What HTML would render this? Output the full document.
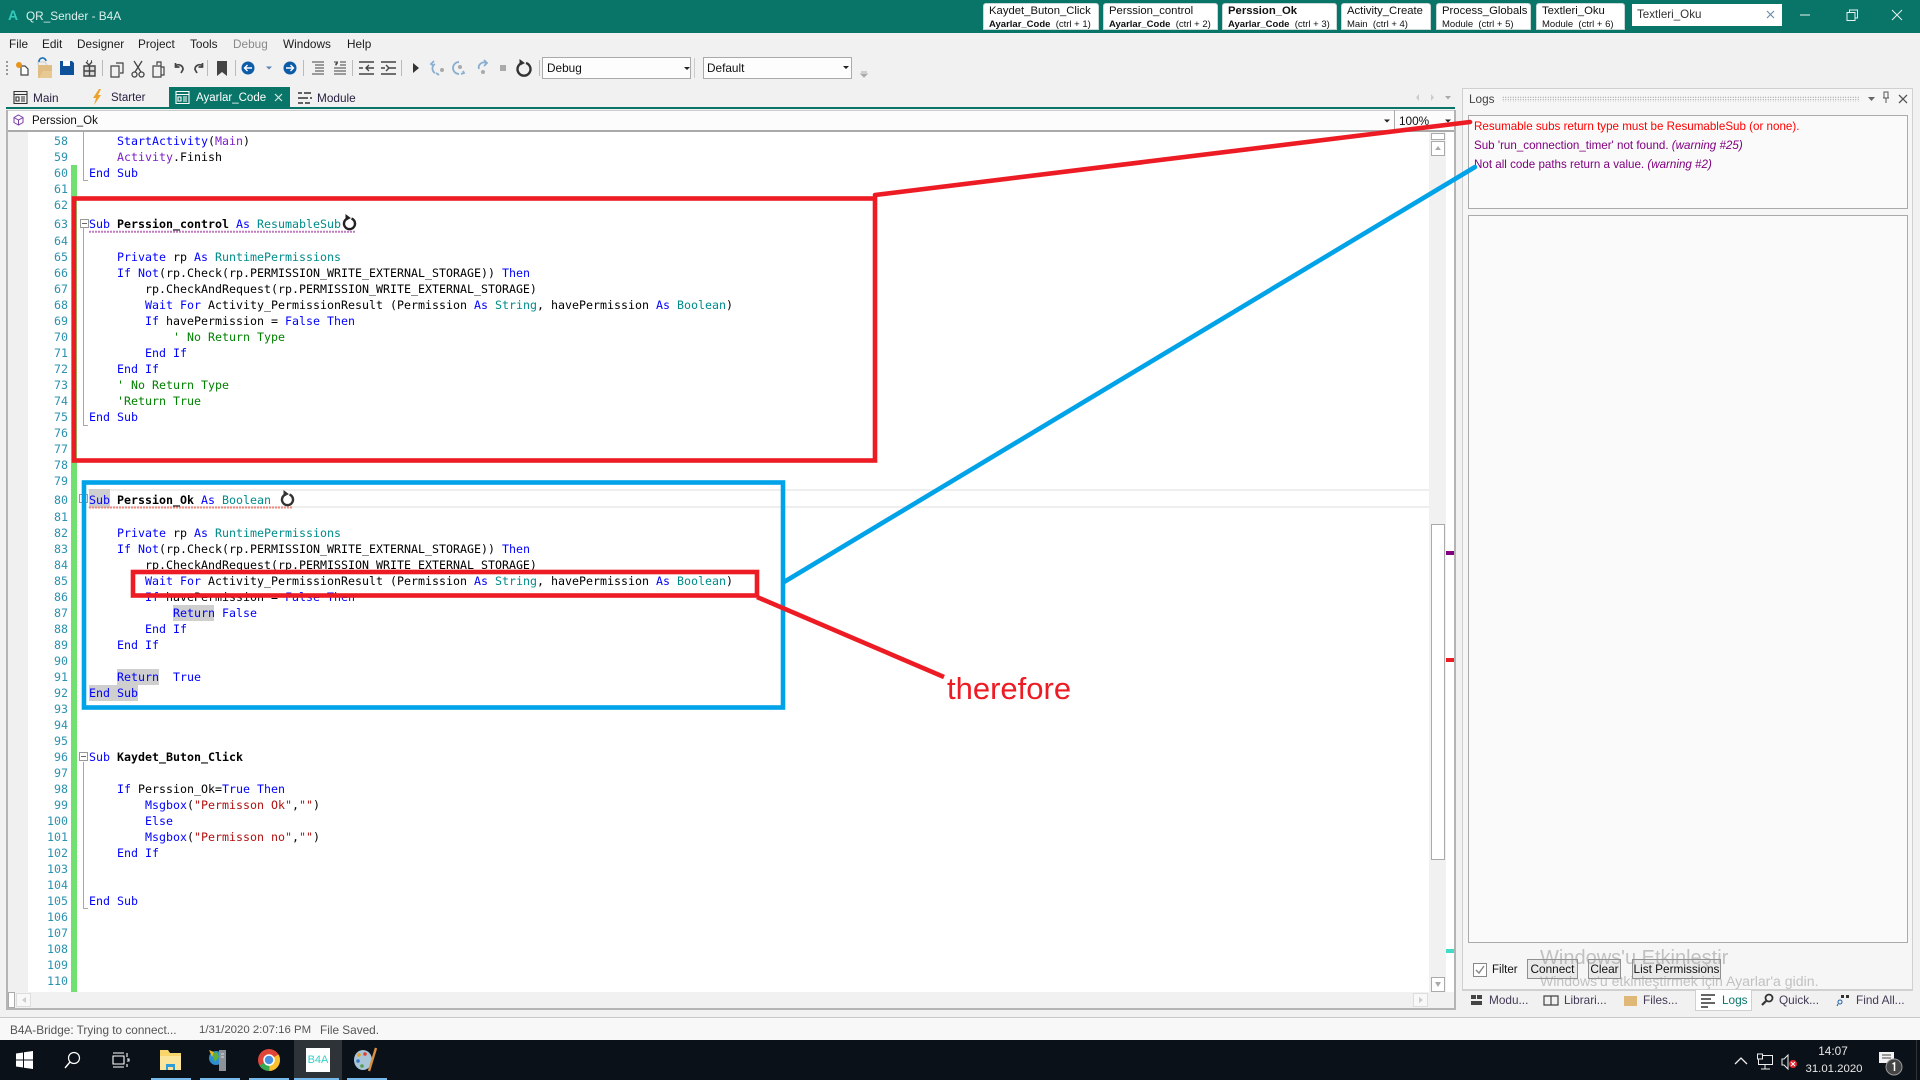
<!DOCTYPE html>
<html><head><meta charset="utf-8"><title>QR_Sender - B4A</title>
<style>
html,body{margin:0;padding:0;width:1920px;height:1080px;overflow:hidden;background:#f1f1f1;font-family:"Liberation Sans",sans-serif;font-size:11.8px;color:#222}
div,span.a{position:absolute;white-space:pre}
.b{background:#fff}
.m{top:36px;height:16px;line-height:16px;color:#1c1c1c}
.n,.c{font-family:"DejaVu Sans Mono","Liberation Mono",monospace;font-size:11.63px;height:16px;line-height:16px}
.n{left:28px;width:40px;text-align:right;color:#2b91af}
.c{color:#000}
.k{color:#0000ff}.t{color:#008b8b}.g{color:#008000}.p{color:#7d1fc8}.s{color:#b01010}.bd{font-weight:bold}
.tab{top:3px;height:27px;background:#fff;border:1px solid #c8d8d5;border-radius:3px 3px 0 0;box-sizing:border-box;overflow:hidden}
.tab .l1{left:5px;top:0;font-size:11.3px;line-height:14px;color:#111}
.tab .l2{left:5px;top:15px;font-size:9.5px;line-height:11px;color:#111}
.hl{background:#cfcfcf}
.btn{top:959px;height:20px;line-height:19px;box-sizing:border-box;border:1px solid #8f8f8f;background:rgba(225,225,225,.6);text-align:center;color:#111}
.bt{top:992px;height:16px;line-height:16px;color:#443a55}
.fl{background:#a8a8a8}
</style></head><body>

<!-- title bar -->
<div style="left:0;top:0;width:1920px;height:33px;background:#087568"></div>
<div style="left:8px;top:7px;font-size:14px;font-weight:bold;line-height:16px;color:#35cbbb">A</div>
<div style="left:26px;top:8px;line-height:16px;color:#dcefec">QR_Sender - B4A</div>

<div class="tab" style="left:983px;width:116px"><div class="l1">Kaydet_Buton_Click</div><div class="l2"><b>Ayarlar_Code</b>  (ctrl + 1)</div></div>
<div class="tab" style="left:1103px;width:115px"><div class="l1">Perssion_control</div><div class="l2"><b>Ayarlar_Code</b>  (ctrl + 2)</div></div>
<div class="tab" style="left:1222px;width:115px"><div class="l1"><b>Perssion_Ok</b></div><div class="l2"><b>Ayarlar_Code</b>  (ctrl + 3)</div></div>
<div class="tab" style="left:1341px;width:90px"><div class="l1">Activity_Create</div><div class="l2">Main  (ctrl + 4)</div></div>
<div class="tab" style="left:1436px;width:95px"><div class="l1">Process_Globals</div><div class="l2">Module  (ctrl + 5)</div></div>
<div class="tab" style="left:1536px;width:89px"><div class="l1">Textleri_Oku</div><div class="l2">Module  (ctrl + 6)</div></div>
<div style="left:1632px;top:4px;width:150px;height:22px;background:#fff"></div>
<div style="left:1637px;top:7px;font-size:11.6px;line-height:16px;color:#333">Textleri_Oku</div>

<!-- menu -->
<div class="m" style="left:9px">File</div>
<div class="m" style="left:42px">Edit</div>
<div class="m" style="left:77px">Designer</div>
<div class="m" style="left:138px">Project</div>
<div class="m" style="left:190px">Tools</div>
<div class="m" style="left:233px;color:#888">Debug</div>
<div class="m" style="left:283px">Windows</div>
<div class="m" style="left:347px">Help</div>

<!-- combos -->
<div style="left:542px;top:57px;width:149px;height:22px;box-sizing:border-box;border:1px solid #aaa;background:#fdfdfd;line-height:21px;padding-left:4px;color:#111">Debug</div>
<div style="left:703px;top:57px;width:149px;height:22px;box-sizing:border-box;border:1px solid #aaa;background:#fdfdfd;line-height:21px;padding-left:3px;color:#111">Default</div>

<!-- doc tabs -->
<div style="left:169px;top:87px;width:121px;height:20px;background:#087568"></div>
<div style="left:6px;top:107px;width:1449px;height:2px;background:#087568"></div>
<div style="left:33px;top:90px;line-height:16px;color:#2a2140">Main</div>
<div style="left:111px;top:90px;font-size:11.5px;line-height:16px;color:#2a2140">Starter</div>
<div style="left:196px;top:90px;font-size:11.5px;line-height:16px;color:#fff">Ayarlar_Code</div>
<div style="left:317px;top:90px;line-height:16px;color:#2a2140">Module</div>

<!-- editor frame -->
<div style="left:7px;top:110px;width:1448px;height:22px;background:#fcfcfc;border-top:1px solid #ccc;border-left:1px solid #ccc;box-sizing:border-box;border-bottom:2px solid #aaa"></div>
<div style="left:1394px;top:110px;width:1px;height:22px;background:#aaa"></div>
<div style="left:32px;top:113px;font-size:11.5px;line-height:16px;color:#111">Perssion_Ok</div>
<div style="left:1399px;top:113px;line-height:16px;color:#111">100%</div>
<div style="left:7px;top:132px;width:1447px;height:876px;background:#fff"></div>
<div style="left:7px;top:132px;width:21px;height:876px;background:#f0f0f0"></div>
<div style="left:6px;top:110px;width:2px;height:900px;background:#b4b4b4"></div>
<div style="left:1454px;top:110px;width:2px;height:900px;background:#b4b4b4"></div>
<div style="left:6px;top:1008px;width:1450px;height:2px;background:#b4b4b4"></div>
<div style="left:8px;top:992px;width:1446px;height:16px;background:#f1f1f1"></div>
<div style="left:1429px;top:132px;width:17px;height:860px;background:#f1f1f1"></div>
<div style="left:1431px;top:524px;width:14px;height:336px;background:#fff;border:1px solid #aaa;box-sizing:border-box"></div>
<div style="left:1431px;top:133px;width:14px;height:7px;background:#fff;border:1px solid #aaa;box-sizing:border-box"></div>
<div style="left:1431px;top:141px;width:14px;height:15px;background:#fff;border:1px solid #aaa;box-sizing:border-box"></div>
<div style="left:1431px;top:977px;width:14px;height:15px;background:#fff;border:1px solid #aaa;box-sizing:border-box"></div>
<div style="left:8px;top:992px;width:7px;height:16px;background:#fff;border:1px solid #aaa;box-sizing:border-box"></div>
<div style="left:16px;top:993px;width:15px;height:14px;background:#f8f8f8;border:1px solid #ddd;box-sizing:border-box"></div>
<div style="left:1413px;top:993px;width:15px;height:14px;background:#f8f8f8;border:1px solid #ddd;box-sizing:border-box"></div>
<div style="left:1446px;top:551px;width:8px;height:4px;background:#800080"></div>
<div style="left:1446px;top:658px;width:8px;height:4px;background:#ed1c24"></div>
<div style="left:1446px;top:949px;width:8px;height:4px;background:#40dcc8"></div>

<!-- current line -->
<div style="left:88px;top:489px;width:1341px;height:19px;box-sizing:border-box;border-top:2px solid #eee;border-bottom:2px solid #eee"></div>
<div class="hl" style="left:89px;top:489px;width:21px;height:19px"></div>
<div class="hl" style="left:173px;top:605px;width:41px;height:16px"></div>
<div class="hl" style="left:117px;top:669px;width:42px;height:16px"></div>
<div class="hl" style="left:89px;top:685px;width:49px;height:16px"></div>

<!-- green change bar -->
<div style="left:71px;top:165px;width:6px;height:827px;background:#70e070"></div>

<!-- fold markers -->
<div class="fl" style="left:83px;top:132px;width:1px;height:48px"></div><div class="fl" style="left:83px;top:180px;width:5px;height:1px"></div>
<div class="fl" style="left:83px;top:228px;width:1px;height:197px"></div><div class="fl" style="left:83px;top:425px;width:5px;height:1px"></div>
<div class="fl" style="left:83px;top:762px;width:1px;height:146px"></div><div class="fl" style="left:83px;top:908px;width:5px;height:1px"></div>
<div style="left:80px;top:219px;width:9px;height:9px;box-sizing:border-box;border:1px solid #999;background:#fff"></div><div style="left:82px;top:223px;width:5px;height:1px;background:#666"></div>
<div style="left:79px;top:494px;width:9px;height:9px;box-sizing:border-box;border:1px solid #999;background:#fff"></div>
<div style="left:79px;top:752px;width:9px;height:9px;box-sizing:border-box;border:1px solid #999;background:#fff"></div><div style="left:81px;top:756px;width:5px;height:1px;background:#666"></div>

<!-- line numbers -->
<div class="n" style="top:133px">58</div><div class="n" style="top:149px">59</div><div class="n" style="top:165px">60</div><div class="n" style="top:181px">61</div><div class="n" style="top:197px">62</div><div class="n" style="top:216px">63</div><div class="n" style="top:233px">64</div><div class="n" style="top:249px">65</div><div class="n" style="top:265px">66</div><div class="n" style="top:281px">67</div><div class="n" style="top:297px">68</div><div class="n" style="top:313px">69</div><div class="n" style="top:329px">70</div><div class="n" style="top:345px">71</div><div class="n" style="top:361px">72</div><div class="n" style="top:377px">73</div><div class="n" style="top:393px">74</div><div class="n" style="top:409px">75</div><div class="n" style="top:425px">76</div><div class="n" style="top:441px">77</div><div class="n" style="top:457px">78</div><div class="n" style="top:473px">79</div><div class="n" style="top:492px">80</div><div class="n" style="top:509px">81</div><div class="n" style="top:525px">82</div><div class="n" style="top:541px">83</div><div class="n" style="top:557px">84</div><div class="n" style="top:573px">85</div><div class="n" style="top:589px">86</div><div class="n" style="top:605px">87</div><div class="n" style="top:621px">88</div><div class="n" style="top:637px">89</div><div class="n" style="top:653px">90</div><div class="n" style="top:669px">91</div><div class="n" style="top:685px">92</div><div class="n" style="top:701px">93</div><div class="n" style="top:717px">94</div><div class="n" style="top:733px">95</div><div class="n" style="top:749px">96</div><div class="n" style="top:765px">97</div><div class="n" style="top:781px">98</div><div class="n" style="top:797px">99</div><div class="n" style="top:813px">100</div><div class="n" style="top:829px">101</div><div class="n" style="top:845px">102</div><div class="n" style="top:861px">103</div><div class="n" style="top:877px">104</div><div class="n" style="top:893px">105</div><div class="n" style="top:909px">106</div><div class="n" style="top:925px">107</div><div class="n" style="top:941px">108</div><div class="n" style="top:957px">109</div><div class="n" style="top:973px">110</div>

<!-- code -->
<div class="c" style="left:117px;top:133px"><span class="k">StartActivity</span>(<span class="p">Main</span>)</div>
<div class="c" style="left:117px;top:149px"><span class="p">Activity</span>.Finish</div>
<div class="c" style="left:89px;top:165px"><span class="k">End Sub</span></div>
<div class="c" style="left:89px;top:216px"><span class="k">Sub</span> <span class="bd">Perssion_control</span> <span class="k">As</span> <span class="t">ResumableSub</span></div>
<div class="c" style="left:117px;top:249px"><span class="k">Private</span> rp <span class="k">As</span> <span class="t">RuntimePermissions</span></div>
<div class="c" style="left:117px;top:265px"><span class="k">If Not</span>(rp.Check(rp.PERMISSION_WRITE_EXTERNAL_STORAGE)) <span class="k">Then</span></div>
<div class="c" style="left:145px;top:281px">rp.CheckAndRequest(rp.PERMISSION_WRITE_EXTERNAL_STORAGE)</div>
<div class="c" style="left:145px;top:297px"><span class="k">Wait For</span> Activity_PermissionResult (Permission <span class="k">As</span> <span class="t">String</span>, havePermission <span class="k">As</span> <span class="t">Boolean</span>)</div>
<div class="c" style="left:145px;top:313px"><span class="k">If</span> havePermission = <span class="k">False Then</span></div>
<div class="c g" style="left:173px;top:329px">' No Return Type</div>
<div class="c k" style="left:145px;top:345px">End If</div>
<div class="c k" style="left:117px;top:361px">End If</div>
<div class="c g" style="left:117px;top:377px">' No Return Type</div>
<div class="c g" style="left:117px;top:393px">'Return True</div>
<div class="c k" style="left:89px;top:409px">End Sub</div>
<div class="c" style="left:89px;top:492px"><span class="k">Sub</span> <span class="bd">Perssion_Ok</span> <span class="k">As</span> <span class="t">Boolean</span></div>
<div class="c" style="left:117px;top:525px"><span class="k">Private</span> rp <span class="k">As</span> <span class="t">RuntimePermissions</span></div>
<div class="c" style="left:117px;top:541px"><span class="k">If Not</span>(rp.Check(rp.PERMISSION_WRITE_EXTERNAL_STORAGE)) <span class="k">Then</span></div>
<div class="c" style="left:145px;top:557px">rp.CheckAndRequest(rp.PERMISSION_WRITE_EXTERNAL_STORAGE)</div>
<div class="c" style="left:145px;top:573px"><span class="k">Wait For</span> Activity_PermissionResult (Permission <span class="k">As</span> <span class="t">String</span>, havePermission <span class="k">As</span> <span class="t">Boolean</span>)</div>
<div class="c" style="left:145px;top:589px"><span class="k">If</span> havePermission = <span class="k">False Then</span></div>
<div class="c k" style="left:173px;top:605px">Return False</div>
<div class="c k" style="left:145px;top:621px">End If</div>
<div class="c k" style="left:117px;top:637px">End If</div>
<div class="c k" style="left:117px;top:669px">Return  True</div>
<div class="c k" style="left:89px;top:685px">End Sub</div>
<div class="c" style="left:89px;top:749px"><span class="k">Sub</span> <span class="bd">Kaydet_Buton_Click</span></div>
<div class="c" style="left:117px;top:781px"><span class="k">If</span> Perssion_Ok=<span class="k">True Then</span></div>
<div class="c" style="left:145px;top:797px"><span class="k">Msgbox</span>(<span class="s">"Permisson Ok"</span>,<span class="s">""</span>)</div>
<div class="c k" style="left:145px;top:813px">Else</div>
<div class="c" style="left:145px;top:829px"><span class="k">Msgbox</span>(<span class="s">"Permisson no"</span>,<span class="s">""</span>)</div>
<div class="c k" style="left:117px;top:845px">End If</div>
<div class="c k" style="left:89px;top:893px">End Sub</div>

<!-- logs panel -->
<div style="left:1462px;top:88px;width:451px;height:902px;box-sizing:border-box;border:1px solid #d0d0d0;background:#f6f6f6"></div>
<div style="left:1469px;top:91px;line-height:16px;color:#444">Logs</div>
<div style="left:1502px;top:96px;width:358px;height:6px;background-image:radial-gradient(#aaa 0.6px,transparent 0.7px);background-size:2.5px 2.5px"></div>
<div style="left:1468px;top:115px;width:440px;height:94px;box-sizing:border-box;border:1px solid #aaa;background:#fafafa"></div>
<div style="left:1468px;top:215px;width:440px;height:728px;box-sizing:border-box;border:1px solid #aaa;background:#fafafa"></div>
<div style="left:1474px;top:119px;font-size:11.6px;line-height:16px;color:#f00">Resumable subs return type must be ResumableSub (or none).</div>
<div style="left:1474px;top:138px;font-size:11.6px;line-height:16px;color:#800080">Sub 'run_connection_timer' not found. <i>(warning #25)</i></div>
<div style="left:1474px;top:157px;font-size:11.6px;line-height:16px;color:#800080">Not all code paths return a value. <i>(warning #2)</i></div>

<div style="left:1473px;top:963px;width:14px;height:14px;box-sizing:border-box;border:1px solid #888;background:#fff"></div>
<div style="left:1492px;top:962px;font-size:11.5px;line-height:16px;color:#111">Filter</div>
<div class="btn" style="left:1527px;width:51px">Connect</div>
<div class="btn" style="left:1588px;width:33px">Clear</div>
<div class="btn" style="left:1632px;width:89px">List Permissions</div>
<div style="left:1540px;top:946px;font-size:20px;line-height:24px;color:rgba(150,150,150,.55)">Windows'u Etkinleştir</div>
<div style="left:1540px;top:972px;font-size:14.1px;line-height:18px;color:rgba(150,150,150,.55)">Windows'u etkinleştirmek için Ayarlar'a gidin.</div>

<!-- bottom tabs -->
<div style="left:1462px;top:990px;width:451px;height:1px;background:#d0d0d0"></div>
<div style="left:1695px;top:990px;width:57px;height:21px;background:#fff;border:1px solid #d0d0d0;border-top:0;box-sizing:border-box"></div>
<div class="bt" style="left:1489px">Modu...</div>
<div class="bt" style="left:1564px">Librari...</div>
<div class="bt" style="left:1643px">Files...</div>
<div class="bt" style="left:1722px;color:#087568">Logs</div>
<div class="bt" style="left:1779px">Quick...</div>
<div class="bt" style="left:1856px">Find All...</div>

<!-- status bar -->
<div style="left:0;top:1017px;width:1920px;height:1px;background:#c8c8c8"></div>
<div style="left:0;top:1018px;width:1920px;height:22px;background:#f8f8f8"></div>
<div style="left:10px;top:1022px;line-height:16px;color:#555">B4A-Bridge: Trying to connect...</div>
<div style="left:199px;top:1022px;font-size:11.4px;line-height:16px;color:#555">1/31/2020 2:07:16 PM</div>
<div style="left:320px;top:1022px;line-height:16px;color:#555">File Saved.</div>

<!-- taskbar -->
<div style="left:0;top:1040px;width:1920px;height:40px;background:#0b1118"></div>
<div style="left:294px;top:1040px;width:48px;height:40px;background:#2e3338"></div>
<div style="left:306px;top:1048px;width:24px;height:24px;background:#fff;color:#35cfc8;font-size:11px;line-height:24px;text-align:center">B4A</div>
<div style="left:1800px;top:1043px;width:66px;text-align:center;line-height:16px;color:#e8e8e8">14:07</div>
<div style="left:1800px;top:1061px;width:68px;text-align:center;font-size:11.4px;line-height:16px;color:#e8e8e8">31.01.2020</div>

<!-- icons and annotations -->
<svg style="position:absolute;left:0;top:0" width="1920" height="1080" viewBox="0 0 1920 1080" fill="none">
<!-- window controls -->
<path d="M1800 15h10" stroke="#e8f2f0"/>
<path d="M1847 12.500h8v8h-8zM1849.500 12.500v-2.500h8v8h-2.500" stroke="#e8f2f0"/>
<path d="M1892 10l10 10M1902 10l-10 10" stroke="#e8f2f0"/>
<path d="M1767 11l7 7M1774 11l-7 7" stroke="#6688aa" stroke-width="1.100"/>
<!-- toolbar grip -->
<path d="M7 61v15" stroke="#999" stroke-width="2" stroke-dasharray="2 2"/>
<!-- new -->
<path d="M21 66h4l3 3v6h-7z" stroke="#444" stroke-width="1.200" fill="#fff"/><circle cx="19" cy="65" r="3" fill="#e8941a"/>
<!-- open -->
<path d="M38 65h14v13H38z" fill="#dfbd85"/><path d="M38 65v-3h7l2 3" fill="#eee" stroke="#ccc"/><path d="M39 62a3.500 3.500 0 0 1 7-1" stroke="#1a6fb5" stroke-width="1.600"/><path d="M39 78l4-7h9v7z" fill="#e8c993"/>
<!-- save -->
<path d="M60 61h12l2 2v12H60z" fill="#0d519b"/><path d="M63 61h7v5h-7z" fill="#fff"/>
<!-- save all -->
<path d="M84 66h11v10H84zM89.500 66v10M84 71h11" stroke="#444" stroke-width="1.400" fill="#ddd"/><path d="M86 62l3 3 3-3M87 61h1M91 61h1" stroke="#444" stroke-width="1.400"/>
<path d="M102.500 60v16" stroke="#bbb"/>
<!-- copy -->
<path d="M116 63h7v10h-3" stroke="#444" stroke-width="1.200"/><path d="M111 66h8v11h-8z" stroke="#444" stroke-width="1.200" fill="#f1f1f1"/>
<!-- cut -->
<path d="M134 61l7 11M142 61l-7 11" stroke="#444" stroke-width="1.300"/><circle cx="134.500" cy="74.500" r="2.500" stroke="#444" stroke-width="1.300"/><circle cx="141.500" cy="74.500" r="2.500" stroke="#444" stroke-width="1.300"/>
<!-- paste -->
<path d="M153 66h8v11h-8zM161 67h3v8h-3M157 65v-3h4v4" stroke="#444" stroke-width="1.200"/>
<!-- undo redo -->
<path d="M176 65.500a4.500 4.500 0 0 1 7 4l-2 3.500M175.500 63v4h4" stroke="#444" stroke-width="1.700"/>
<path d="M202 65.500a4.500 4.500 0 0 0-7 4l2 3.500M202.500 63v4h-4" stroke="#444" stroke-width="1.700"/>
<path d="M207.500 60v16" stroke="#bbb"/>
<!-- bookmark -->
<path d="M217 61h10v15l-5-4-5 4z" fill="#444"/>
<path d="M235.500 60v16" stroke="#bbb"/>
<!-- back forward -->
<circle cx="248" cy="68" r="6.500" fill="#0e5ca8"/><path d="M252 68h-7M247.500 65l-3 3 3 3" stroke="#fff" stroke-width="1.400"/>
<path d="M266 66.500h6l-3 3z" fill="#5a84ad"/>
<circle cx="290" cy="68" r="6.500" fill="#0e5ca8"/><path d="M286 68h7M290.500 65l3 3-3 3" stroke="#fff" stroke-width="1.400"/>
<path d="M303.500 60v16" stroke="#bbb"/>
<!-- indent/comment -->
<path d="M312 62h12M315 65h9M315 68h9M315 71h9M312 74h12" stroke="#444"/>
<path d="M334 62h4M340 62h6M340 65h6M334 68h12M334 71h12M334 74h12" stroke="#444"/><path d="M335 64l2-2 1 1-2 3z" fill="#444"/>
<path d="M352.500 60v16" stroke="#bbb"/>
<path d="M359 62h15M359 74h15M359 68h4M366 68h8M369 65l-3 3 3 3" stroke="#444" stroke-width="1.400"/>
<path d="M381 62h15M381 74h15M381 68h4M388 68h8M386 65l3 3-3 3" stroke="#444" stroke-width="1.400"/>
<path d="M401.500 60v16" stroke="#bbb"/>
<!-- debug -->
<path d="M413 63l6 5-6 5z" fill="#333"/>
<path d="M435 64a4.500 5 0 0 0 0 9M434 61l-3 3 3 2M436 73l3 2" stroke="#89aed0" stroke-width="1.800"/><circle cx="442" cy="70" r="2" fill="#aaa"/>
<path d="M459 62a6 6 0 0 0 0 12M461 74l3-1-1-2" stroke="#89aed0" stroke-width="1.800"/><circle cx="460" cy="67" r="2" fill="#aaa"/>
<path d="M486 63a5 5 0 0 0-7 6M484 60l3 3-3 3" stroke="#89aed0" stroke-width="1.800"/><circle cx="483" cy="72" r="2" fill="#aaa"/>
<rect x="500" y="65" width="6" height="6" fill="#aaa"/>
<path d="M522 63a6.500 6.500 0 1 0 4 0" stroke="#333" stroke-width="2.400"/><path d="M520 60l4 3-4 2z" fill="#333" stroke="#333"/>
<path d="M539.500 60v16" stroke="#bbb"/>
<path d="M684 67h6l-3 3zM843 66h6l-3 3zM1384 119.500h6l-3 3zM1445 119.500h6l-3 3z" fill="#222"/>
<path d="M694.500 58v20" stroke="#ccc"/>
<path d="M861 72h6M861 74h6l-3 3z" stroke="#aaa" fill="#aaa"/>
<!-- doc tab icons -->
<path d="M14 91.500h13v12H14zM14 94.500h13M16 97h3v4h-3zM21 97h4M21 99h4M21 101h4" stroke="#333" stroke-width="1.100"/>
<path d="M99 89l-6 9h3l-2 7 7-10h-3l3-6z" fill="#eba32c"/>
<path d="M176 91.500h13v12h-13zM176 94.500h13M178 97h3v4h-3zM183 97h4M183 99h4M183 101h4" stroke="#fff" stroke-width="1.100"/>
<path d="M275 94l7 7M282 94l-7 7" stroke="#d5e6e3" stroke-width="1.200"/>
<path d="M298 93h4M304 93h7M298 98h10M310 98h2M298 103h5M305 103h5" stroke="#333" stroke-width="1.500"/>
<!-- nav arrows -->
<path d="M1419 94v7l-3-3.500zM1431 94v7l3-3.500z" fill="#ccc"/><path d="M1445 96h6l-3 3.500z" fill="#aaa"/>
<!-- symbol icon -->
<path d="M18.500 115l4.500 2.500v5l-4.500 2.500-4.500-2.500v-5zM14 117.500l4.500 2.500 4.500-2.500M18.500 120v5" stroke="#7a3fa8"/>
<!-- restart icons -->
<path d="M347.500 218.500a5.500 5.500 0 1 0 4 0" stroke="#222" stroke-width="2.400"/><path d="M346 215l4 3-4 2z" fill="#222" stroke="#222"/>
<path d="M285.500 494.500a5.500 5.500 0 1 0 4 0" stroke="#333" stroke-width="2.400"/><path d="M284 491l4 3-4 2z" fill="#333" stroke="#333"/>
<!-- squiggles -->
<line x1="89" y1="231.700" x2="356" y2="231.700" stroke="#c27cc2" stroke-width="2" stroke-dasharray="2 1"/>
<line x1="89" y1="507.500" x2="293" y2="507.500" stroke="#ee8a80" stroke-width="2" stroke-dasharray="2 1"/>
<!-- scroll arrows -->
<path d="M1435 150l3-4 3 4z" fill="#aaa"/><path d="M1435 982l3 5 3-5z" fill="#aaa"/>
<path d="M26 997v6l-4-3z" fill="#ccc"/><path d="M1419 997v6l4-3z" fill="#ccc"/>
<!-- logs header icons -->
<path d="M1868 97h7l-3.500 4z" fill="#666"/><path d="M1884 92h4v6h-4zM1883 98h6M1886 98v5" stroke="#555"/><path d="M1899 95l8 8M1907 95l-8 8" stroke="#555" stroke-width="1.300"/>
<path d="M1476 970l3 3 5-7" stroke="#888" stroke-width="1.400"/>
<!-- bottom tab icons -->
<path d="M1471 995h5v4h-5zM1477 995h5v4h-5zM1471 1001h11v4h-11z" fill="#444"/>
<path d="M1551 996h-7v9h7zM1551 996h7v9h-7z" stroke="#444" stroke-width="1.200"/>
<path d="M1624 996h13v10h-13z" fill="#dfb878"/>
<path d="M1701 995h14M1701 999h10M1701 1003h14M1701 1007h7" stroke="#333" stroke-width="1.500"/>
<circle cx="1769" cy="998" r="3.500" stroke="#333" stroke-width="1.800"/><path d="M1766 1001l-4 4" stroke="#333" stroke-width="2.200"/>
<path d="M1841 995h3v3h-3zM1846 995h3v3h-3z" fill="#333"/><circle cx="1840" cy="1002" r="2" stroke="#1a5fa5"/><path d="M1838 1004l-1 2" stroke="#1a5fa5"/>
<!-- taskbar -->
<path d="M16 1053.500l7-1v7h-7zM24 1052.300l9-1.300v8.500h-9zM16 1060.500h7v7l-7-1zM24 1060.500h9v8.500l-9-1.300z" fill="#fff"/>
<circle cx="74" cy="1058" r="5.500" stroke="#fff" stroke-width="1.200"/><path d="M70 1062l-5 6" stroke="#fff" stroke-width="1.400"/>
<path d="M113 1053h11M113 1067h11M113 1056h11v8h-11zM127 1053v4M127 1059h2v2h-2M127 1064v3" stroke="#fff" stroke-width="1.100"/>
<path d="M160 1050h8l2 3h11v17h-21z" fill="#f7d56b"/><path d="M160 1056h21v14h-21z" fill="#fbe59c"/><path d="M166 1064h9v6h-2v-3h-5v3h-2z" fill="#2b9ddb"/>
<circle cx="216" cy="1058" r="7" fill="#2d8fcf"/><path d="M212 1054l5-2 2 5-4 5z" fill="#5fb03a"/><path d="M209 1050l5 2-2 5z" fill="#e8b92a"/><path d="M219 1050h7v21h-7z" fill="#8c9297"/><path d="M221 1054h3M221 1057h3" stroke="#ddd"/>
<circle cx="269" cy="1060" r="11" fill="#e0453a"/><path d="M269 1060l-9.500 5.500a11 11 0 0 0 10 5.500z" fill="#37a853"/><path d="M269 1060l9.500-5.500a11 11 0 0 1-9 16.500z" fill="#fbc02d"/><circle cx="269" cy="1060" r="5" fill="#4a90e2" stroke="#fff" stroke-width="1.500"/>
<ellipse cx="363" cy="1060" rx="9" ry="10" fill="#a9c5d8"/><circle cx="359" cy="1055" r="1.800" fill="#e8a020"/><circle cx="365" cy="1054" r="1.800" fill="#e04030"/><circle cx="358" cy="1061" r="1.800" fill="#3a78c8"/><circle cx="362" cy="1066" r="1.800" fill="#50a050"/><path d="M376 1048l-7 23" stroke="#d89040" stroke-width="2.400"/>
<path d="M151 1079h40M200 1079h40M249 1079h40M294 1079h45M347 1079h40" stroke="#76b9ed" stroke-width="2"/>
<!-- tray -->
<path d="M1735 1064l6-6 6 6" stroke="#eee" stroke-width="1.300"/>
<path d="M1758.500 1055.500h14v9h-14zM1765 1065v4M1761 1069h9" stroke="#eee"/><path d="M1757.500 1054h5v5h-5z" fill="#0b1118" stroke="#eee"/>
<path d="M1782 1059h2l4-4v14l-4-4h-2z" stroke="#eee"/><circle cx="1793" cy="1064" r="4" fill="#e02530"/><path d="M1791 1062l4 4M1795 1062l-4 4" stroke="#fff"/>
<path d="M1879 1052h15v11h-15z" fill="#f2f2f2"/><path d="M1882 1055h9M1882 1058h9" stroke="#444"/><circle cx="1894" cy="1067" r="8" fill="#444" stroke="#999"/><path d="M1892.500 1064l2-1v8" stroke="#fff" stroke-width="1.500"/>
<path d="M1916.500 1040v40" stroke="#333"/>
<!-- annotations -->
<rect x="74" y="198.500" width="801" height="262" stroke="#ed1c24" stroke-width="4.600"/>
<path d="M875 195L1470 122" stroke="#ed1c24" stroke-width="4.600" stroke-linecap="round"/>
<rect x="84" y="482.500" width="699" height="225" stroke="#00a2e8" stroke-width="4.600"/>
<path d="M784 582L1475 167" stroke="#00a2e8" stroke-width="4.600" stroke-linecap="round"/>
<rect x="133" y="572" width="624" height="23.500" stroke="#ed1c24" stroke-width="4.600"/>
<path d="M757 597L944 677" stroke="#ed1c24" stroke-width="4.600"/>
</svg>
<div style="left:947px;top:669px;font-size:31px;line-height:40px;color:#ed1c24">therefore</div>
</body></html>
